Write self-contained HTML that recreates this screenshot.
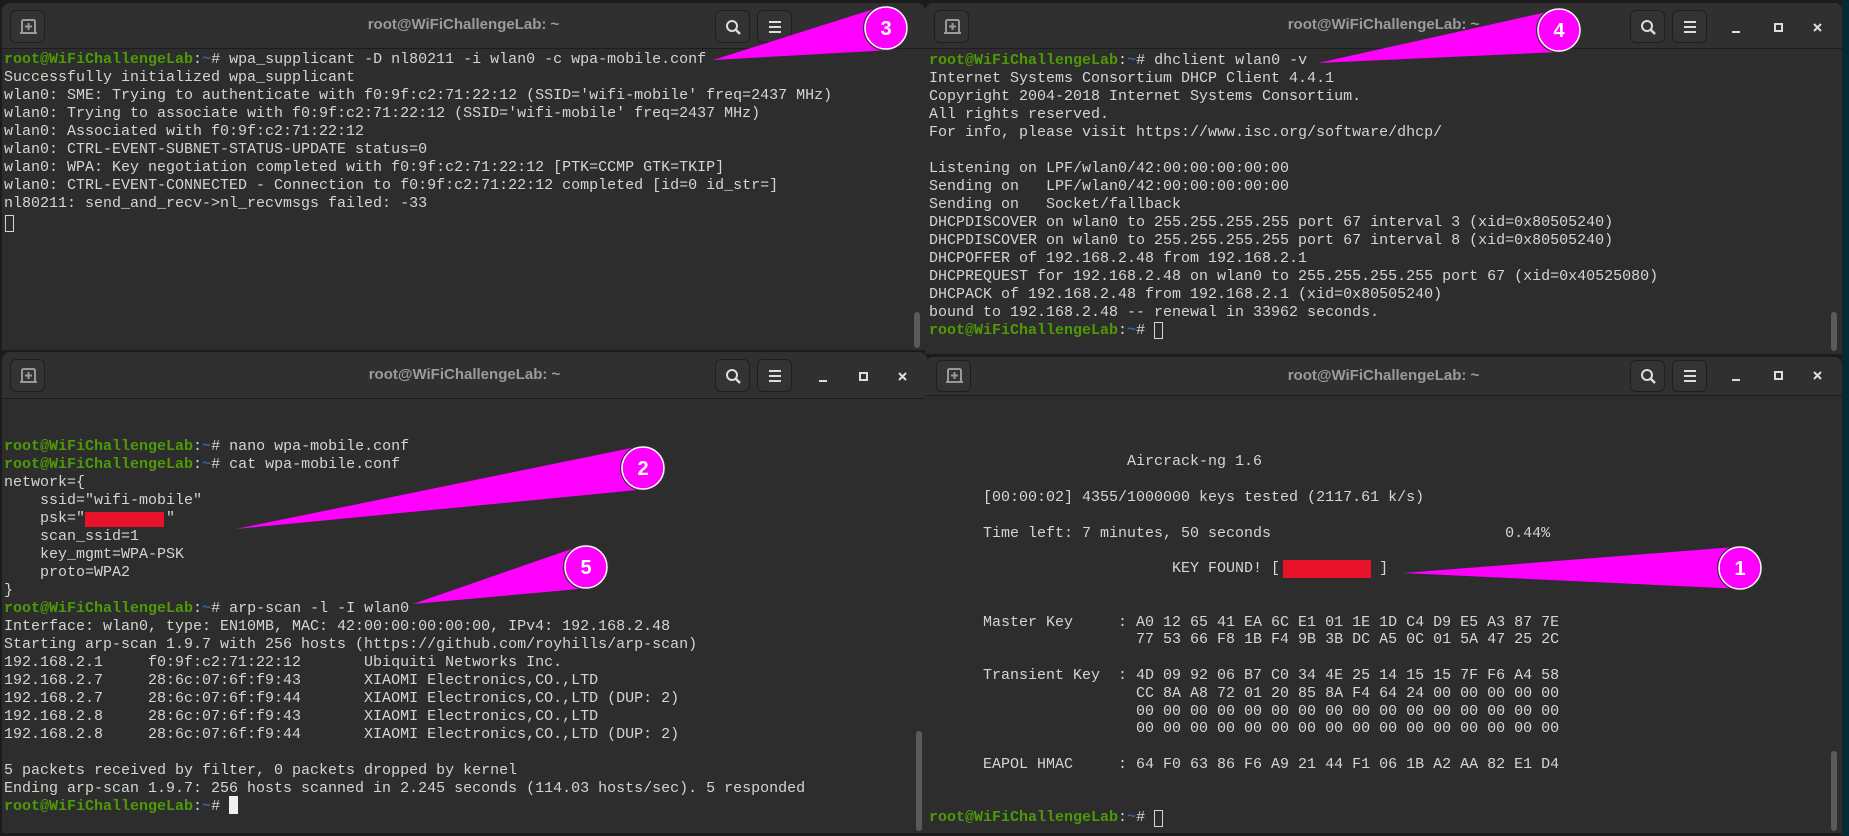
<!DOCTYPE html>
<html><head><meta charset="utf-8"><style>
*{margin:0;padding:0;box-sizing:border-box}
body{width:1849px;height:836px;background:#1c1c1c;position:relative;overflow:hidden;font-family:"Liberation Mono",monospace}
.teal{position:absolute;left:1842px;top:0;width:7px;height:836px;background:#062a33}
.win{position:absolute;background:#2d2d2d;overflow:hidden;border-radius:8px 8px 0 0}
.tb{position:absolute;left:0;right:0;top:0;background:#303030;border-bottom:1px solid #1d1d1d}
.title{position:absolute;top:0;left:0;right:0;text-align:center;font:bold 15px "Liberation Sans",sans-serif;color:#9b9b9b}
.btn{position:absolute;width:35px;height:33px;border:1px solid #1f1f1f;border-radius:6px;background:#333}
.tx{position:absolute;font-size:15px;line-height:18px;color:#d3d7cf;white-space:pre;font-family:"Liberation Mono",monospace}
.g{color:#4e9a06;font-weight:bold}
.b{color:#3465a4;font-weight:bold}
.sb{position:absolute;width:6px;background:#5a5a5a;border-radius:3px}
.red{position:absolute;background:#e8132a}
</style></head><body>
<div class="teal"></div>

<!-- Top-left -->
<div class="win" style="left:2px;top:3px;width:923px;height:347px">
 <div class="tb" style="height:46px">
  <div class="title" style="line-height:44px">root@WiFiChallengeLab: ~</div>
  <div class="btn" style="left:8px;top:7px"><svg width="35" height="33" viewBox="0 0 35 33"><rect x="11" y="9" width="13" height="13" rx="1.5" fill="none" stroke="#999" stroke-width="2"/><path d="M17.5 12v7M14 15.5h7M9 22h17" stroke="#999" stroke-width="2"/></svg></div>
  <div class="btn" style="left:713px;top:7px"><svg width="35" height="33"><circle cx="16" cy="15" r="5" fill="none" stroke="#ddd" stroke-width="2"/><path d="M20 19l4 4" stroke="#ddd" stroke-width="2.4"/></svg></div>
  <div class="btn" style="left:755px;top:7px"><svg width="35" height="33"><path d="M11 11h12M11 16h12M11 21h12" stroke="#ddd" stroke-width="2"/></svg></div>
 </div>
 <div class="tx" style="left:2px;top:48px"><span class="g">root@WiFiChallengeLab</span>:<span class="b">~</span># wpa_supplicant -D nl80211 -i wlan0 -c wpa-mobile.conf
Successfully initialized wpa_supplicant
wlan0: SME: Trying to authenticate with f0:9f:c2:71:22:12 (SSID='wifi-mobile' freq=2437 MHz)
wlan0: Trying to associate with f0:9f:c2:71:22:12 (SSID='wifi-mobile' freq=2437 MHz)
wlan0: Associated with f0:9f:c2:71:22:12
wlan0: CTRL-EVENT-SUBNET-STATUS-UPDATE status=0
wlan0: WPA: Key negotiation completed with f0:9f:c2:71:22:12 [PTK=CCMP GTK=TKIP]
wlan0: CTRL-EVENT-CONNECTED - Connection to f0:9f:c2:71:22:12 completed [id=0 id_str=]
nl80211: send_and_recv-&gt;nl_recvmsgs failed: -33</div>
 <div style="position:absolute;left:3px;top:212px;width:9px;height:17px;border:1px solid #d3d7cf"></div>
 <div class="sb" style="left:912px;top:309px;height:36px"></div>
</div>

<!-- Top-right -->
<div class="win" style="left:925px;top:3px;width:917px;height:351px">
 <div class="tb" style="height:46px">
  <div class="title" style="line-height:44px">root@WiFiChallengeLab: ~</div>
  <div class="btn" style="left:9px;top:7px"><svg width="35" height="33" viewBox="0 0 35 33"><rect x="11" y="9" width="13" height="13" rx="1.5" fill="none" stroke="#999" stroke-width="2"/><path d="M17.5 12v7M14 15.5h7M9 22h17" stroke="#999" stroke-width="2"/></svg></div>
  <div class="btn" style="left:705px;top:7px"><svg width="35" height="33"><circle cx="16" cy="15" r="5" fill="none" stroke="#ddd" stroke-width="2"/><path d="M20 19l4 4" stroke="#ddd" stroke-width="2.4"/></svg></div>
  <div class="btn" style="left:747px;top:7px"><svg width="35" height="33"><path d="M11 11h12M11 16h12M11 21h12" stroke="#ddd" stroke-width="2"/></svg></div>
  <svg style="position:absolute;left:800px;top:10px" width="110" height="30"><path d="M7 19h8" stroke="#ddd" stroke-width="2"/><rect x="50" y="11" width="7" height="7" fill="none" stroke="#ddd" stroke-width="2"/><path d="M89 11l7 7M96 11l-7 7" stroke="#ddd" stroke-width="2"/></svg>
 </div>
 <div class="tx" style="left:4px;top:49px"><span class="g">root@WiFiChallengeLab</span>:<span class="b">~</span># dhclient wlan0 -v
Internet Systems Consortium DHCP Client 4.4.1
Copyright 2004-2018 Internet Systems Consortium.
All rights reserved.
For info, please visit https://www.isc.org/software/dhcp/

Listening on LPF/wlan0/42:00:00:00:00:00
Sending on   LPF/wlan0/42:00:00:00:00:00
Sending on   Socket/fallback
DHCPDISCOVER on wlan0 to 255.255.255.255 port 67 interval 3 (xid=0x80505240)
DHCPDISCOVER on wlan0 to 255.255.255.255 port 67 interval 8 (xid=0x80505240)
DHCPOFFER of 192.168.2.48 from 192.168.2.1
DHCPREQUEST for 192.168.2.48 on wlan0 to 255.255.255.255 port 67 (xid=0x40525080)
DHCPACK of 192.168.2.48 from 192.168.2.1 (xid=0x80505240)
bound to 192.168.2.48 -- renewal in 33962 seconds.
<span class="g">root@WiFiChallengeLab</span>:<span class="b">~</span># </div>
 <div style="position:absolute;left:229px;top:319px;width:9px;height:17px;border:1px solid #d3d7cf"></div>
 <div class="sb" style="left:906px;top:309px;height:39px"></div>
</div>

<!-- Bottom-left -->
<div class="win" style="left:2px;top:352px;width:925px;height:481px">
 <div class="tb" style="height:47px">
  <div class="title" style="line-height:46px">root@WiFiChallengeLab: ~</div>
  <div class="btn" style="left:8px;top:7px"><svg width="35" height="33" viewBox="0 0 35 33"><rect x="11" y="9" width="13" height="13" rx="1.5" fill="none" stroke="#999" stroke-width="2"/><path d="M17.5 12v7M14 15.5h7M9 22h17" stroke="#999" stroke-width="2"/></svg></div>
  <div class="btn" style="left:713px;top:7px"><svg width="35" height="33"><circle cx="16" cy="15" r="5" fill="none" stroke="#ddd" stroke-width="2"/><path d="M20 19l4 4" stroke="#ddd" stroke-width="2.4"/></svg></div>
  <div class="btn" style="left:755px;top:7px"><svg width="35" height="33"><path d="M11 11h12M11 16h12M11 21h12" stroke="#ddd" stroke-width="2"/></svg></div>
  <svg style="position:absolute;left:810px;top:10px" width="110" height="30"><path d="M7 19h8" stroke="#ddd" stroke-width="2"/><rect x="48" y="11" width="7" height="7" fill="none" stroke="#ddd" stroke-width="2"/><path d="M87 11l7 7M94 11l-7 7" stroke="#ddd" stroke-width="2"/></svg>
 </div>
 <div class="tx" style="left:2px;top:86px"><span class="g">root@WiFiChallengeLab</span>:<span class="b">~</span># nano wpa-mobile.conf
<span class="g">root@WiFiChallengeLab</span>:<span class="b">~</span># cat wpa-mobile.conf
network={
    ssid="wifi-mobile"
    psk="         "
    scan_ssid=1
    key_mgmt=WPA-PSK
    proto=WPA2
}
<span class="g">root@WiFiChallengeLab</span>:<span class="b">~</span># arp-scan -l -I wlan0
Interface: wlan0, type: EN10MB, MAC: 42:00:00:00:00:00, IPv4: 192.168.2.48
Starting arp-scan 1.9.7 with 256 hosts (https://github.com/royhills/arp-scan)
192.168.2.1     f0:9f:c2:71:22:12       Ubiquiti Networks Inc.
192.168.2.7     28:6c:07:6f:f9:43       XIAOMI Electronics,CO.,LTD
192.168.2.7     28:6c:07:6f:f9:44       XIAOMI Electronics,CO.,LTD (DUP: 2)
192.168.2.8     28:6c:07:6f:f9:43       XIAOMI Electronics,CO.,LTD
192.168.2.8     28:6c:07:6f:f9:44       XIAOMI Electronics,CO.,LTD (DUP: 2)

5 packets received by filter, 0 packets dropped by kernel
Ending arp-scan 1.9.7: 256 hosts scanned in 2.245 seconds (114.03 hosts/sec). 5 responded
<span class="g">root@WiFiChallengeLab</span>:<span class="b">~</span># </div>
 <div style="position:absolute;left:227px;top:444px;width:9px;height:18px;background:#eee"></div>
 <div class="red" style="left:83px;top:160px;width:79px;height:15px"></div>
 <div class="sb" style="left:914px;top:379px;height:100px"></div>
</div>

<!-- Bottom-right -->
<div class="win" style="left:925px;top:357px;width:917px;height:476px">
 <div class="tb" style="height:39px">
  <div class="title" style="line-height:38px">root@WiFiChallengeLab: ~</div>
  <div class="btn" style="left:11px;top:3px;height:32px"><svg width="35" height="32" viewBox="0 0 35 32"><rect x="11" y="8" width="13" height="13" rx="1.5" fill="none" stroke="#999" stroke-width="2"/><path d="M17.5 11v7M14 14.5h7M9 21h17" stroke="#999" stroke-width="2"/></svg></div>
  <div class="btn" style="left:705px;top:3px;height:32px"><svg width="35" height="32"><circle cx="16" cy="14" r="5" fill="none" stroke="#ddd" stroke-width="2"/><path d="M20 18l4 4" stroke="#ddd" stroke-width="2.4"/></svg></div>
  <div class="btn" style="left:747px;top:3px;height:32px"><svg width="35" height="32"><path d="M11 10h12M11 15h12M11 20h12" stroke="#ddd" stroke-width="2"/></svg></div>
  <svg style="position:absolute;left:800px;top:5px" width="110" height="30"><path d="M7 18h8" stroke="#ddd" stroke-width="2"/><rect x="50" y="10" width="7" height="7" fill="none" stroke="#ddd" stroke-width="2"/><path d="M89 10l7 7M96 10l-7 7" stroke="#ddd" stroke-width="2"/></svg>
 </div>
 <div class="tx" style="left:4px;top:43px;line-height:17.8px">


                      Aircrack-ng 1.6

      [00:00:02] 4355/1000000 keys tested (2117.61 k/s)

      Time left: 7 minutes, 50 seconds                          0.44%

                           KEY FOUND! [           ]


      Master Key     : A0 12 65 41 EA 6C E1 01 1E 1D C4 D9 E5 A3 87 7E
                       77 53 66 F8 1B F4 9B 3B DC A5 0C 01 5A 47 25 2C

      Transient Key  : 4D 09 92 06 B7 C0 34 4E 25 14 15 15 7F F6 A4 58
                       CC 8A A8 72 01 20 85 8A F4 64 24 00 00 00 00 00
                       00 00 00 00 00 00 00 00 00 00 00 00 00 00 00 00
                       00 00 00 00 00 00 00 00 00 00 00 00 00 00 00 00

      EAPOL HMAC     : 64 F0 63 86 F6 A9 21 44 F1 06 1B A2 AA 82 E1 D4


<span class="g">root@WiFiChallengeLab</span>:<span class="b">~</span># </div>
 <div class="red" style="left:358px;top:203px;width:88px;height:18px"></div>
 <div style="position:absolute;left:229px;top:453px;width:9px;height:17px;border:1px solid #d3d7cf"></div>
 <div class="sb" style="left:906px;top:394px;height:80px"></div>
</div>

<!-- Annotations -->
<svg style="position:absolute;left:0;top:0" width="1849" height="836">
 <g fill="#ff00ff">
  <polygon points="713,60 880,7 892,50"/>
  <polygon points="1318,63 1547,12 1560,52"/>
  <polygon points="236,529 636,447 648,489"/>
  <polygon points="413,604 580,546 590,588"/>
  <polygon points="1403,573 1735,547 1742,589"/>
 </g>
 <g stroke="#fff" stroke-width="1.5" fill="#ff00ff">
  <circle cx="886" cy="28" r="21"/>
  <circle cx="1559" cy="30" r="21"/>
  <circle cx="643" cy="468" r="21"/>
  <circle cx="586" cy="567" r="21"/>
  <circle cx="1740" cy="568" r="21"/>
 </g>
 <g fill="none" stroke="#333" stroke-width="1">
  <circle cx="886" cy="28" r="22.5"/>
  <circle cx="1559" cy="30" r="22.5"/>
  <circle cx="643" cy="468" r="22.5"/>
  <circle cx="586" cy="567" r="22.5"/>
  <circle cx="1740" cy="568" r="22.5"/>
 </g>
 <g fill="#fff" font-family="Liberation Sans, sans-serif" font-weight="bold" font-size="20" text-anchor="middle">
  <text x="886" y="35">3</text>
  <text x="1559" y="37">4</text>
  <text x="643" y="475">2</text>
  <text x="586" y="574">5</text>
  <text x="1740" y="575">1</text>
 </g>
</svg>
</body></html>
